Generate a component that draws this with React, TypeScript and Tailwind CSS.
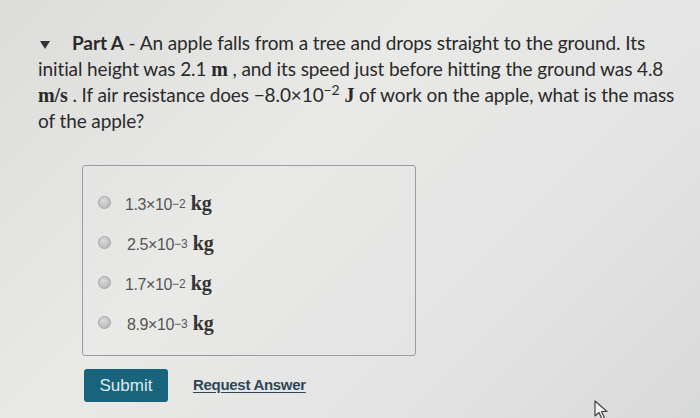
import React from "react";

const options: [string, string][] = [
  ["1.3×10", "−2"],
  ["2.5×10", "−3"],
  ["1.7×10", "−2"],
  ["8.9×10", "−3"],
];

export default function App() {
  return (
    <div className="relative w-[700px] h-[418px] overflow-hidden bg-[linear-gradient(135deg,#dcdcda_0%,#e9e9e7_40%,#e3e4e3_70%,#d8dad9_100%)]">
      <div className="pl-[38px] pt-[30px] text-[19px] leading-[26px] text-[#2a2a2a] [font-family:Lato,'Open_Sans',sans-serif] whitespace-nowrap tracking-[-0.1px]">
        <div>
          <span className="inline-block w-[34px] pl-[2px] align-middle">
            <svg width="10" height="8" viewBox="0 0 10 8"><path d="M0 0 L10 0 L5 8 Z" fill="#333" /></svg>
          </span>
          <span className="font-bold">Part A</span>
          <span> - An apple falls from a tree and drops straight to the ground. Its</span>
        </div>
        <div>
          <span>initial height was 2.1 </span>
          <span className="text-[20px] font-semibold [font-family:'Liberation_Serif',serif]">m</span>
          <span> , and its speed just before hitting the ground was 4.8</span>
        </div>
        <div>
          <span className="text-[20px] font-semibold [font-family:'Liberation_Serif',serif]">m/s</span>
          <span> . If air resistance does −8.0×10</span>
          <sup className="text-[14px] leading-none">−2</sup>
          <span> </span>
          <span className="text-[20px] font-semibold [font-family:'Liberation_Serif',serif]">J</span>
          <span> of work on the apple, what is the mass</span>
        </div>
        <div>of the apple?</div>
      </div>

      <div className="ml-[82px] mt-[31px] w-[334px] h-[191px] border border-[#9c9c9c] rounded-[3px] flex flex-col pt-[26px] pl-[15px] gap-[19px]">
        {options.map(([base, exp], i) => (
          <div key={i} className="flex items-center h-[21px]">
            <div className="w-[13px] h-[13px] rounded-full bg-[radial-gradient(circle_at_40%_35%,#dcdcdc,#b0b0b0)] border border-[#a5a5a5]" />
            <div className={i === 0 || i === 2 ? "ml-[14px] flex items-baseline" : "ml-[16px] flex items-baseline"}>
              <span className="text-[16px] text-[#555] [font-family:'Liberation_Sans',sans-serif] tracking-[-0.4px]">{base}</span>
              <sup className="text-[12px] text-[#555] [font-family:'Liberation_Sans',sans-serif] relative -top-[2px]">{exp}</sup>
              <span className="ml-[5px] text-[20px] font-bold text-[#333] [font-family:'Liberation_Serif',serif]">kg</span>
            </div>
          </div>
        ))}
      </div>

      <div className="ml-[84px] mt-[13px] flex items-center">
        <div className="w-[84px] h-[33px] rounded-[3px] bg-[#17647c] flex items-center justify-center text-[17px] text-[#dfe9ec] [font-family:'Liberation_Sans',sans-serif]">
          Submit
        </div>
        <div className="ml-[25px] text-[15px] font-bold text-[#2e4658] underline underline-offset-2 [font-family:'Liberation_Sans',sans-serif] tracking-[-0.3px]">
          Request Answer
        </div>
      </div>

      <svg className="absolute left-[594px] top-[400px]" width="16" height="20" viewBox="0 0 16 20">
        <path d="M1 1 L1 16 L5 12.5 L8 19 L10.5 18 L7.5 11.5 L13 11.5 Z" fill="#f4f4f4" stroke="#444" strokeWidth="1.2" strokeLinejoin="round" />
      </svg>
    </div>
  );
}
